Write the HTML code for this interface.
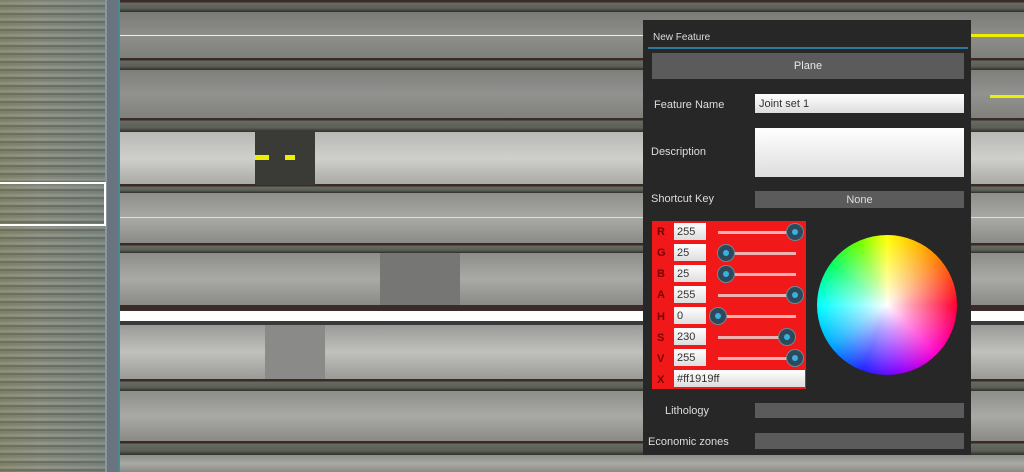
<!DOCTYPE html><html><head><style>
*{margin:0;padding:0;box-sizing:border-box}
body{width:1024px;height:472px;overflow:hidden;background:#5a5c56;position:relative;font-family:"Liberation Sans",sans-serif}
.a{position:absolute}
.core{position:absolute;left:120px;width:904px;background:linear-gradient(#8d8d8a,#a9a9a6 50%,#8a8a87)}
.rail{position:absolute;left:120px;width:904px;background:linear-gradient(#3a2a28 0,#3a2a28 2px,#666a60 3px,#5b5f55 70%,#2e302c)}
.lbl{color:#ddd;font-size:12px;position:absolute}
.in{position:absolute;background:linear-gradient(#fff,#ddd);font-size:11px;color:#333;padding:4px 4px}
.btn{position:absolute;background:#5b5b5b;color:#ddd;font-size:11px;text-align:center}
.rl{position:absolute;left:657px;color:#7a0000;font-size:11px;font-weight:bold}
.tb{position:absolute;left:674px;width:32px;height:17px;background:linear-gradient(#fff,#ddd);font-size:11px;color:#333;padding:3px 3px}
.sl{position:absolute;left:718px;width:78px;height:3px;background:#f0b0b0}
.k{position:absolute;width:18px;height:18px;border-radius:50%;background:#2e4a5a;border:1px solid #6a8a9a}
.k::after{content:"";position:absolute;left:5px;top:5px;width:6px;height:6px;border-radius:50%;background:#3ab0e0}
</style></head><body>
<div class="a" style="left:0;top:0;width:105px;height:472px;background:repeating-linear-gradient(#7b7f72 0,#9a9d90 4px,#5e6258 6px,#8a8d80 8px)"></div>
<div class="a" style="left:0;top:0;width:105px;height:472px;background:linear-gradient(90deg,rgba(120,120,60,.25),rgba(0,0,0,0) 40%,rgba(80,110,130,.2))"></div>
<div class="a" style="left:105px;top:0;width:15px;height:472px;background:#6a7480;border-left:2px solid #8a96a0;border-right:2px solid #4a8a90"></div>
<div class="a" style="left:0;top:182px;width:106px;height:44px;border:2px solid #fff;border-left:none"></div>
<div class="rail" style="top:0;height:12px"></div>
<div class="core" style="top:12px;height:48px;background:linear-gradient(#7a7a76,#8e8e8a 50%,#7d7d79)"></div>
<div class="rail" style="top:58px;height:12px"></div>
<div class="core" style="top:70px;height:48px;background:linear-gradient(#7e7e7a,#929290 50%,#80807c)"></div>
<div class="rail" style="top:118px;height:14px"></div>
<div class="core" style="top:132px;height:53px;background:linear-gradient(#b8b8b4,#cfcfcb 50%,#a8a8a4)"></div>
<div class="rail" style="top:184px;height:9px"></div>
<div class="core" style="top:193px;height:50px"></div>
<div class="rail" style="top:243px;height:10px"></div>
<div class="core" style="top:253px;height:52px"></div>
<div class="a" style="left:380px;top:253px;width:80px;height:52px;background:#767674"></div>
<div class="a" style="left:120px;top:305px;width:904px;height:6px;background:#3a2a28"></div>
<div class="a" style="left:120px;top:311px;width:904px;height:10px;background:#fff"></div>
<div class="a" style="left:120px;top:321px;width:904px;height:4px;background:#3a3a38"></div>
<div class="core" style="top:325px;height:54px;background:linear-gradient(#9a9a98,#c0c0bc 50%,#9a9a96)"></div>
<div class="a" style="left:265px;top:325px;width:60px;height:54px;background:#8a8a88"></div>
<div class="rail" style="top:379px;height:12px"></div>
<div class="core" style="top:391px;height:50px"></div>
<div class="rail" style="top:441px;height:14px"></div>
<div class="core" style="top:455px;height:17px"></div>
<div class="a" style="left:120px;top:35px;width:904px;height:1px;background:#eee"></div>
<div class="a" style="left:120px;top:217px;width:904px;height:1px;background:#ddd"></div>
<div class="a" style="left:255px;top:130px;width:60px;height:55px;background:#3a3a36"></div>
<div class="a" style="left:255px;top:155px;width:14px;height:5px;background:#ee0"></div>
<div class="a" style="left:285px;top:155px;width:10px;height:5px;background:#ee0"></div>
<div class="a" style="left:970px;top:34px;width:54px;height:3px;background:#ee0"></div>
<div class="a" style="left:990px;top:95px;width:34px;height:3px;background:#ee0"></div>

<div class="a" style="left:643px;top:20px;width:328px;height:435px;background:#272727"></div>
<div class="lbl" style="left:653px;top:32px;font-size:10px">New Feature</div>
<div class="a" style="left:648px;top:47px;width:320px;height:2px;background:#2a7a9a"></div>
<div class="btn" style="left:652px;top:53px;width:312px;height:26px;line-height:27px;color:#e8e8e8">Plane</div>
<div class="lbl" style="left:654px;top:99px;font-size:11px">Feature Name</div>
<div class="in" style="left:755px;top:94px;width:209px;height:19px">Joint set 1</div>
<div class="lbl" style="left:651px;top:146px;font-size:11px">Description</div>
<div class="in" style="left:755px;top:128px;width:209px;height:49px"></div>
<div class="lbl" style="left:651px;top:193px;font-size:11px">Shortcut Key</div>
<div class="btn" style="left:755px;top:191px;width:209px;height:17px;line-height:18px">None</div>
<div class="a" style="left:652px;top:221px;width:154px;height:168px;background:#f01818"></div>
<div class="rl" style="top:226px">R</div><div class="tb" style="top:223px">255</div><div class="sl" style="top:231px"></div><div class="k" style="left:786px;top:223px"></div>
<div class="rl" style="top:247px">G</div><div class="tb" style="top:244px">25</div><div class="sl" style="top:252px"></div><div class="k" style="left:717px;top:244px"></div>
<div class="rl" style="top:268px">B</div><div class="tb" style="top:265px">25</div><div class="sl" style="top:273px"></div><div class="k" style="left:717px;top:265px"></div>
<div class="rl" style="top:289px">A</div><div class="tb" style="top:286px">255</div><div class="sl" style="top:294px"></div><div class="k" style="left:786px;top:286px"></div>
<div class="rl" style="top:311px">H</div><div class="tb" style="top:307px">0</div><div class="sl" style="top:315px"></div><div class="k" style="left:709px;top:307px"></div>
<div class="rl" style="top:332px">S</div><div class="tb" style="top:328px">230</div><div class="sl" style="top:336px"></div><div class="k" style="left:778px;top:328px"></div>
<div class="rl" style="top:353px">V</div><div class="tb" style="top:349px">255</div><div class="sl" style="top:357px"></div><div class="k" style="left:786px;top:349px"></div>
<div class="rl" style="top:374px">X</div><div class="tb" style="top:370px;width:131px">#ff1919ff</div>
<div class="a" style="left:817px;top:235px;width:140px;height:140px;border-radius:50%;background:conic-gradient(#ff0 0deg,#f80 45deg,#f03 90deg,#f0c 135deg,#80f 170deg,#22f 200deg,#0af 235deg,#0ff 270deg,#0f6 305deg,#6f0 335deg,#ff0 360deg)"></div>
<div class="a" style="left:817px;top:235px;width:140px;height:140px;border-radius:50%;background:radial-gradient(circle,#fff 0,rgba(255,255,255,.6) 25%,rgba(255,255,255,0) 70%)"></div>
<div class="lbl" style="left:665px;top:405px;font-size:11px">Lithology</div>
<div class="btn" style="left:755px;top:403px;width:209px;height:15px"></div>
<div class="lbl" style="left:648px;top:436px;font-size:11px">Economic zones</div>
<div class="btn" style="left:755px;top:433px;width:209px;height:16px"></div>
</body></html>
